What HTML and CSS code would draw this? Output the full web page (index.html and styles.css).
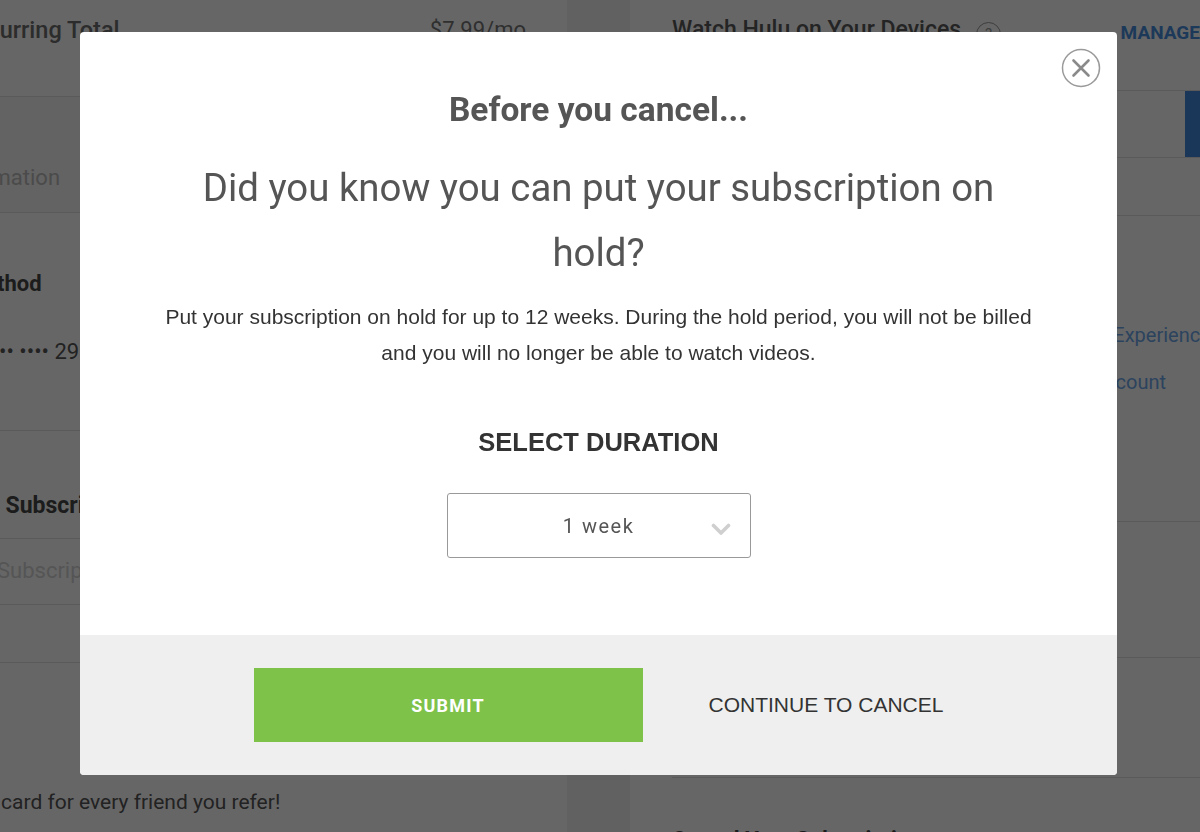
FILE: index.html
```html
<!DOCTYPE html>
<html lang="en">
<head>
    <meta charset="UTF-8">
    <meta name="viewport" content="width=device-width, initial-scale=1.0">
    <title>Account - Hold Subscription</title>
    <link rel="stylesheet" href="styles.css">
</head>
<body>
    <!-- Account page behind the dialog -->
    <div class="account">
        <section class="panel-left">
            <div class="row row-total">
                <span class="label label-total">Recurring Total</span>
                <span class="price">$7.99/mo</span>
            </div>
            <div class="row row-tabs">
                <span class="tab tab-info">Payment Information</span>
            </div>
            <div class="row row-method">
                <div class="label label-method">Payment Method</div>
                <div class="card-number">•••• •••• •••• 2991</div>
            </div>
            <div class="row row-addons">
                <span class="label label-addons">Your Subscriptions</span>
            </div>
            <div class="row row-field">
                <span class="placeholder">Subscription ID</span>
            </div>
            <div class="row row-blank"></div>
            <p class="referral">Get a $10 gift card for every friend you refer!</p>
        </section>

        <div class="gutter"></div>

        <section class="panel-right">
            <div class="rrow rrow-devices">
                <span class="label label-devices">Watch Hulu on Your Devices</span>
                <span class="help-icon">?</span>
                <a class="manage">MANAGE</a>
            </div>
            <div class="rrow rrow-plan">
                <span class="upgrade">UPGRADE</span>
            </div>
            <div class="rrow rrow-addons"></div>
            <div class="rrow rrow-links">
                <a class="link link-experience">Ad Experience</a>
                <a class="link link-account">Account</a>
            </div>
            <div class="rrow rrow-profiles"></div>
            <div class="rrow rrow-privacy"></div>
            <div class="label cancel-title">Cancel Your Subscription</div>
        </section>
    </div>

    <div class="overlay"></div>

    <!-- Hold subscription dialog -->
    <div class="modal">
        <div class="modal-body">
            <button class="close" aria-label="Close">
                <svg width="40" height="40" viewBox="0 0 40 40">
                    <circle cx="20" cy="20" r="18.5" fill="none" stroke="#9a9a9a" stroke-width="1.5"/>
                    <path d="M12.5 12.5 L27.5 27.5 M27.5 12.5 L12.5 27.5" stroke="#8a8a8a" stroke-width="2.6" stroke-linecap="round"/>
                </svg>
            </button>
            <h2 class="modal-title">Before you cancel...</h2>
            <p class="modal-question">Did you know you can put your subscription on hold?</p>
            <p class="modal-text">Put your subscription on hold for up to 12 weeks. During the hold period, you will not be billed and you will no longer be able to watch videos.</p>
            <h3 class="duration-title">SELECT DURATION</h3>
            <div class="select">
                <span class="select-value">1 week</span>
                <svg class="select-arrow" width="20" height="13" viewBox="0 0 20 13">
                    <path d="M2.5 2.5 L10 10 L17.5 2.5" fill="none" stroke="#cfcfcf" stroke-width="3.6" stroke-linecap="round" stroke-linejoin="round"/>
                </svg>
            </div>
        </div>
        <div class="modal-footer">
            <button class="btn-submit">SUBMIT</button>
            <button class="btn-link">CONTINUE TO CANCEL</button>
        </div>
    </div>
</body>
</html>
```

FILE: styles.css
```css
* {
    box-sizing: border-box;
}
html, body {
    margin: 0;
    height: 100%;
}
body {
    overflow: hidden;
    background: #fff;
    font-family: Roboto, 'Liberation Sans', sans-serif;
    color: #444;
}

/* ---- account page ---- */
.account {
    display: flex;
    height: 100%;
}
.panel-left {
    flex: 0 0 567px;
    min-width: 0;
    overflow: hidden;
}
.gutter {
    flex: 0 0 63px;
    background: #f3f3f3;
}
.panel-right {
    flex: 0 0 570px;
    min-width: 0;
}
.row {
    display: flex;
    border-bottom: 1px solid #e2e2e2;
    white-space: nowrap;
}
.label {
    font-size: 22px;
    line-height: 28px;
    font-weight: 500;
    color: #5a5a5a;
}
.row-total {
    height: 97px;
    padding: 16px 41px 0 0;
    justify-content: space-between;
    align-items: flex-start;
}
.label-total {
    margin-left: -40px;
    font-size: 23.5px;
    color: #6e6e6e;
}
.price {
    font-size: 22px;
    line-height: 28px;
    color: #777;
}
.row-tabs {
    height: 116px;
    background: #f7f7f7;
    align-items: flex-end;
    padding-bottom: 20px;
}
.tab {
    font-size: 22px;
    line-height: 28px;
    color: #bbb;
}
.tab-info {
    margin-left: -146px;
}
.row-method {
    height: 218px;
    flex-direction: column;
    padding-top: 57px;
}
.label-method {
    margin-left: -127px;
    font-weight: 700;
    color: #474747;
}
.card-number {
    margin: 40px 0 0 -51px;
    font-size: 22px;
    line-height: 28px;
    color: #555;
}
.row-addons {
    height: 108px;
    padding-top: 61px;
}
.label-addons {
    margin-left: -48px;
    font-size: 23px;
    font-weight: 700;
    color: #474747;
}
.row-field {
    height: 66px;
    padding-top: 18px;
}
.placeholder {
    margin-left: -3px;
    font-size: 22px;
    line-height: 28px;
    color: #d5d5d5;
}
.row-blank {
    height: 58px;
}
.referral {
    margin: 125px 0 0 -130px;
    font-size: 21px;
    line-height: 28px;
    color: #555;
    white-space: nowrap;
}

.rrow {
    display: flex;
    margin-left: 42px;
    border-bottom: 1px solid #e2e2e2;
    white-space: nowrap;
}
.rrow-devices {
    height: 91px;
    padding-top: 16px;
    align-items: flex-start;
}
.label-devices {
    font-size: 23px;
}
.help-icon {
    width: 25px;
    height: 25px;
    margin: 6px 0 0 15px;
    border: 1.5px solid #999;
    border-radius: 50%;
    font-size: 15px;
    line-height: 22px;
    text-align: center;
    color: #999;
}
.manage {
    margin: 5px 0 0 auto;
    font-size: 19px;
    line-height: 24px;
    font-weight: 700;
    color: #4a8fe0;
}
.rrow-plan {
    height: 67px;
    justify-content: flex-end;
}
.upgrade {
    width: 140px;
    margin-right: -125px;
    padding: 20px 0 0 36px;
    background: #4388de;
    color: #fff;
    font-size: 16px;
    font-weight: 700;
}
.rrow-addons {
    height: 58px;
}
.rrow-links {
    height: 306px;
    flex-direction: column;
    padding: 105px 0 0 412px;
}
.link {
    font-size: 20px;
    line-height: 28px;
    color: #6fa9ec;
}
.link-account {
    margin: 19px 0 0 8px;
}
.rrow-profiles {
    height: 136px;
}
.rrow-privacy {
    height: 120px;
}
.cancel-title {
    margin: 48px 0 0 42px;
    font-weight: 700;
    color: #474747;
}

.overlay {
    position: fixed;
    inset: 0;
    background: rgba(0, 0, 0, 0.6);
}

/* ---- dialog ---- */
.modal {
    position: fixed;
    top: 32px;
    left: 80px;
    width: 1037px;
    background: #fff;
    border-radius: 4px;
    overflow: hidden;
}
.modal-body {
    position: relative;
    padding: 58px 78px 77px;
    text-align: center;
}
.close {
    position: absolute;
    top: 16px;
    right: 16px;
    width: 40px;
    height: 40px;
    padding: 0;
    border: none;
    background: none;
    cursor: pointer;
}
.close svg {
    display: block;
}
.modal-title {
    margin: 0;
    font-size: 33.5px;
    line-height: 40px;
    font-weight: 700;
    color: #555;
}
.modal-question {
    margin: 25px 0 0;
    font-size: 38.4px;
    line-height: 65px;
    color: #555;
}
.modal-text {
    max-width: 880px;
    margin: 14px auto 0;
    font-family: 'Liberation Sans', Arial, sans-serif;
    font-size: 21px;
    line-height: 36px;
    color: #333;
}
.duration-title {
    margin: 56px 0 0;
    font-family: 'Liberation Sans', Arial, sans-serif;
    font-size: 25.5px;
    line-height: 30px;
    font-weight: 700;
    color: #333;
}
.select {
    position: relative;
    display: flex;
    align-items: center;
    justify-content: center;
    width: 304px;
    height: 65px;
    margin: 36px auto 0;
    border: 1.5px solid #999;
    border-radius: 3px;
}
.select-value {
    font-size: 20px;
    letter-spacing: 1.5px;
    color: #555;
}
.select-arrow {
    position: absolute;
    right: 19px;
    top: 29px;
}
.modal-footer {
    display: flex;
    align-items: center;
    justify-content: center;
    gap: 66px;
    height: 140px;
    background: #efefef;
}
.btn-submit {
    width: 389px;
    height: 74px;
    border: none;
    background: #7ec24a;
    color: #fff;
    font-family: Roboto, sans-serif;
    font-size: 18px;
    font-weight: 700;
    letter-spacing: 1.2px;
    cursor: pointer;
}
.btn-link {
    padding: 0;
    border: none;
    background: none;
    font-family: 'Liberation Sans', Arial, sans-serif;
    font-size: 21px;
    color: #333;
    cursor: pointer;
}
```
